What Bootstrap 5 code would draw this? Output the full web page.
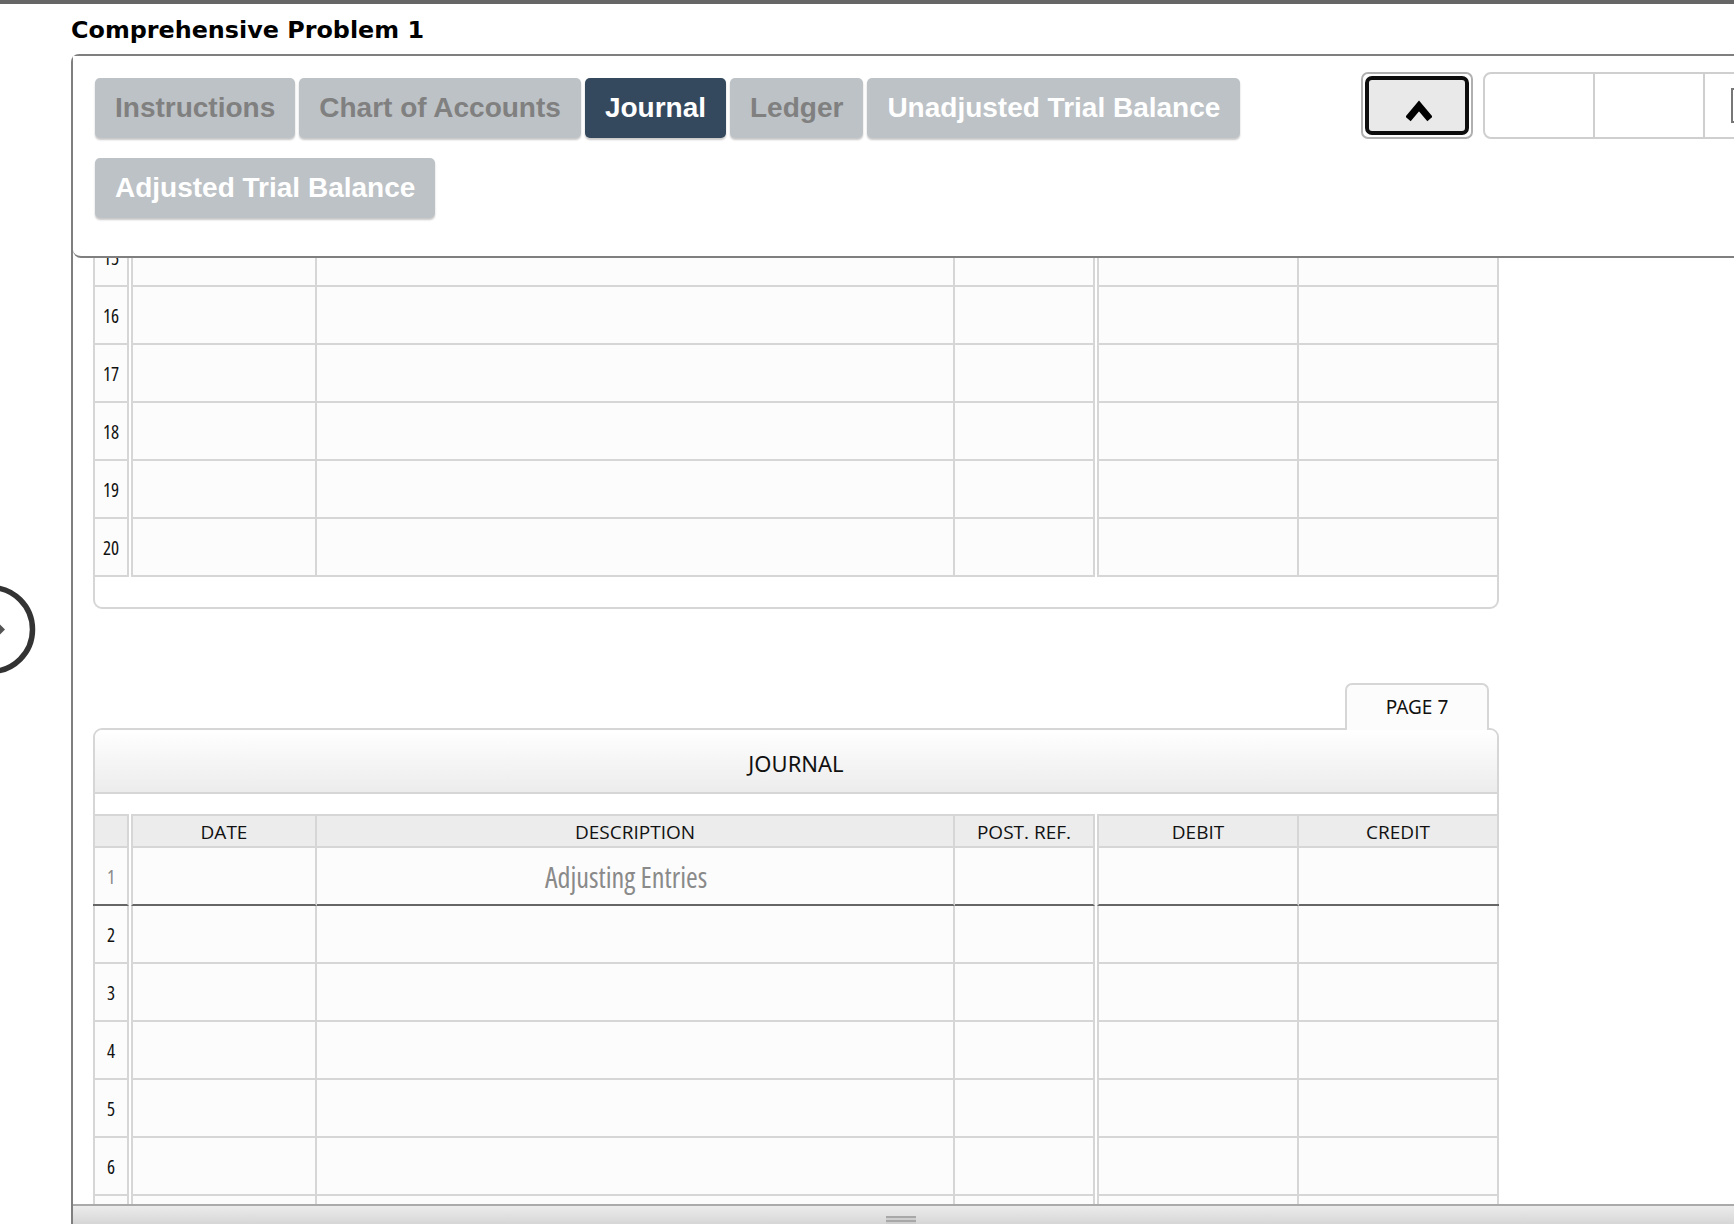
<!DOCTYPE html>
<html lang="en">
<head>
<meta charset="utf-8">
<title>Comprehensive Problem 1</title>
<link href="https://cdn.jsdelivr.net/npm/bootstrap@5.3.0/dist/css/bootstrap.min.css" rel="stylesheet">
<style>
html,body{height:100%;overflow:hidden;background:#fff}
.topline{height:4px;background:#666}
.ptitle{margin:0 0 0 71px;height:49.5px;font:700 23.85px/52px "DejaVu Sans",sans-serif;color:#000}
.shell{margin-left:70.5px;width:1800px;height:calc(100vh - 53.5px);border:2px solid #7f7f7f;border-bottom:0;border-radius:8px 0 0 0;background:#fff}
.headpanel{border-bottom:2px solid #7f7f7f;border-radius:0 0 0 8px;background:#fff;position:relative;z-index:2;margin-bottom:-2px;box-sizing:content-box;height:200px}
.tabwrap{width:1288px;padding:22px 0 0 22.5px;row-gap:20px;column-gap:4px}
.tabbtn{height:60px;padding:0 20px;border:0;border-radius:5px;background:#bdc2c6;font:700 28px/60px "Liberation Sans",Arial,sans-serif;box-shadow:0 2px 2px rgba(0,0,0,.22);color:#808080}
.tabbtn.tw{color:#fff}
.tabbtn.tcur{background:#34495e;color:#fff}
.upring{margin-top:16px;width:112px;height:67px;padding:2px;border:2px solid #b0b0b0;border-radius:7px;background:#fff}
.upbtn{width:104px;height:59px;padding:0;border:4px solid #0d0d0d;border-radius:7px;background:#e9e9e9}
.upbtn svg{display:block;margin:13px auto 0;position:relative;left:2px;filter:blur(.5px)}
.toolgroup{margin:16px 0 0 10.5px;height:67px;border:2px solid #cfcfcf;border-radius:8px;background:#fff}
.toolcell{width:110px;border-right:2px solid #cfcfcf}
.toolicon{display:block;width:16px;height:35px;margin:14px 0 0 26px;border:2px solid #777;background:#fff}
.scrollarea{flex:1 1 0;min-height:0;overflow:hidden;padding-left:20.5px;position:relative}
.sheet{width:1406px;border:2px solid #d6d6d6;border-radius:9px;background:#fff}
.sheet-a{margin-top:-28.5px;padding-bottom:30px}
.pagetab{margin-top:73.5px;margin-left:1252px;width:144px;height:47px;margin-bottom:-2px;border:2px solid #d6d6d6;border-bottom:0;border-radius:7px 7px 0 0;background:#fcfcfc;font:400 19px/44px "Noto Sans",sans-serif;text-align:center;color:#111;position:relative;z-index:1}
.jhead{height:64px;border-bottom:2px solid #d6d6d6;border-radius:7px 7px 0 0;background:linear-gradient(#fff,#ececec);text-align:center;font:400 22px/67px "Noto Sans",sans-serif;color:#111}
.jgap{height:20px}
.jtable{width:1402px;table-layout:fixed;border-collapse:separate;border-spacing:0;font-family:"Open Sans",sans-serif}
.col-n{width:34px}.col-g{width:2px}.col-d{width:186px}.col-x{width:638px}.col-p{width:140px}.col-e{width:202px}.col-c{width:198px}
.jtable td,.jtable th{height:58px;padding:0;background:#fcfcfc;border-bottom:2px solid #d6d6d6;border-right:2px solid #d6d6d6;text-align:center;font-weight:400;color:#111;vertical-align:middle}
.jtable th{height:34px;padding-top:2px;background:#ececec;border-top:2px solid #d6d6d6;font-size:19px;font-stretch:92%}
.jtable .gapc{background:#fff;border:0}
.jtable .numc{font-size:19px;padding-top:3px;font-stretch:87%}
.jtable .leftb{border-left:2px solid #d6d6d6}
.jtable .lastc{border-right:0}
.jtable .faint{color:#8a8a8a}
.jtable .heading{text-align:left;padding-left:228px;padding-top:3px;font-size:28.3px;color:#8a8a8a;font-stretch:75%}
.jtable tr.rule td:not(.gapc){border-bottom-color:#666;position:relative}
.jtable tr.rule .numc::after,.jtable tr.rule .lastc::after{content:"";position:absolute;bottom:-2px;height:2px;width:2px;background:#666}
.jtable tr.rule .numc::after{left:-2px}
.jtable tr.rule .lastc::after{right:-2px}
.bottombar{height:20px;border-top:2px solid #aaa;background:linear-gradient(#ececec,#d6d6d6);position:relative;z-index:2}
.grip{margin-left:813px;margin-top:10px;width:30px;height:8px;background:repeating-linear-gradient(#a8a8a8 0,#a8a8a8 2px,#cfcfcf 2px,#cfcfcf 4px)}
.sidecircle{position:absolute;left:0;top:580px;z-index:3}
</style>
</head>
<body>
<div class="topline"></div>
<h1 class="ptitle">Comprehensive Problem 1</h1>

<svg class="sidecircle" width="40" height="100" viewBox="0 0 40 100" aria-hidden="true">
  <circle cx="-9.5" cy="49.5" r="42" fill="#fff" stroke="#333" stroke-width="5.5"/>
  <path d="M0 44.5 L5 49.5 L0 54.5 Z" fill="#555"/>
</svg>

<div class="shell d-flex flex-column">
  <div class="headpanel d-flex align-items-start flex-shrink-0">
    <div class="tabwrap d-flex flex-wrap align-items-start flex-shrink-0">
      <button class="tabbtn" type="button">Instructions</button>
      <button class="tabbtn" type="button">Chart of Accounts</button>
      <button class="tabbtn tcur" type="button">Journal</button>
      <button class="tabbtn" type="button">Ledger</button>
      <button class="tabbtn tw" type="button">Unadjusted Trial Balance</button>
      <button class="tabbtn tw" type="button">Adjusted Trial Balance</button>
    </div>
    <div class="upring flex-shrink-0">
      <button class="upbtn d-block" type="button" aria-label="Collapse">
        <svg width="26" height="26" viewBox="0 0 26 26"><path d="M2 20 L13 7 L24 20" fill="none" stroke="#000" stroke-width="7"/></svg>
      </button>
    </div>
    <div class="toolgroup d-flex flex-shrink-0">
      <div class="toolcell"></div>
      <div class="toolcell"></div>
      <div class="toolcell"><span class="toolicon"></span></div>
    </div>
  </div>

  <div class="scrollarea">
    <div class="sheet sheet-a">
      <table class="jtable">
        <colgroup><col class="col-n"><col class="col-g"><col class="col-d"><col class="col-x"><col class="col-p"><col class="col-g"><col class="col-e"><col class="col-c"></colgroup>
        <tbody>
          <tr><td class="numc">15</td><td class="gapc"></td><td class="leftb"></td><td></td><td></td><td class="gapc"></td><td class="leftb"></td><td class="lastc"></td></tr>
          <tr><td class="numc">16</td><td class="gapc"></td><td class="leftb"></td><td></td><td></td><td class="gapc"></td><td class="leftb"></td><td class="lastc"></td></tr>
          <tr><td class="numc">17</td><td class="gapc"></td><td class="leftb"></td><td></td><td></td><td class="gapc"></td><td class="leftb"></td><td class="lastc"></td></tr>
          <tr><td class="numc">18</td><td class="gapc"></td><td class="leftb"></td><td></td><td></td><td class="gapc"></td><td class="leftb"></td><td class="lastc"></td></tr>
          <tr><td class="numc">19</td><td class="gapc"></td><td class="leftb"></td><td></td><td></td><td class="gapc"></td><td class="leftb"></td><td class="lastc"></td></tr>
          <tr><td class="numc">20</td><td class="gapc"></td><td class="leftb"></td><td></td><td></td><td class="gapc"></td><td class="leftb"></td><td class="lastc"></td></tr>
        </tbody>
      </table>
    </div>

    <div class="pagetab">PAGE 7</div>
    <div class="sheet">
      <div class="jhead">JOURNAL</div>
      <div class="jgap"></div>
      <table class="jtable">
        <colgroup><col class="col-n"><col class="col-g"><col class="col-d"><col class="col-x"><col class="col-p"><col class="col-g"><col class="col-e"><col class="col-c"></colgroup>
        <thead>
          <tr><th></th><th class="gapc"></th><th class="leftb">DATE</th><th>DESCRIPTION</th><th>POST. REF.</th><th class="gapc"></th><th class="leftb">DEBIT</th><th class="lastc">CREDIT</th></tr>
        </thead>
        <tbody>
          <tr class="rule"><td class="numc faint">1</td><td class="gapc"></td><td class="leftb"></td><td class="heading">Adjusting Entries</td><td></td><td class="gapc"></td><td class="leftb"></td><td class="lastc"></td></tr>
          <tr><td class="numc">2</td><td class="gapc"></td><td class="leftb"></td><td></td><td></td><td class="gapc"></td><td class="leftb"></td><td class="lastc"></td></tr>
          <tr><td class="numc">3</td><td class="gapc"></td><td class="leftb"></td><td></td><td></td><td class="gapc"></td><td class="leftb"></td><td class="lastc"></td></tr>
          <tr><td class="numc">4</td><td class="gapc"></td><td class="leftb"></td><td></td><td></td><td class="gapc"></td><td class="leftb"></td><td class="lastc"></td></tr>
          <tr><td class="numc">5</td><td class="gapc"></td><td class="leftb"></td><td></td><td></td><td class="gapc"></td><td class="leftb"></td><td class="lastc"></td></tr>
          <tr><td class="numc">6</td><td class="gapc"></td><td class="leftb"></td><td></td><td></td><td class="gapc"></td><td class="leftb"></td><td class="lastc"></td></tr>
          <tr><td class="numc"></td><td class="gapc"></td><td class="leftb"></td><td></td><td></td><td class="gapc"></td><td class="leftb"></td><td class="lastc"></td></tr>
        </tbody>
      </table>
    </div>
  </div>

  <div class="bottombar flex-shrink-0"><div class="grip"></div></div>
</div>
<script src="https://cdn.jsdelivr.net/npm/bootstrap@5.3.0/dist/js/bootstrap.bundle.min.js"></script>
</body>
</html>
